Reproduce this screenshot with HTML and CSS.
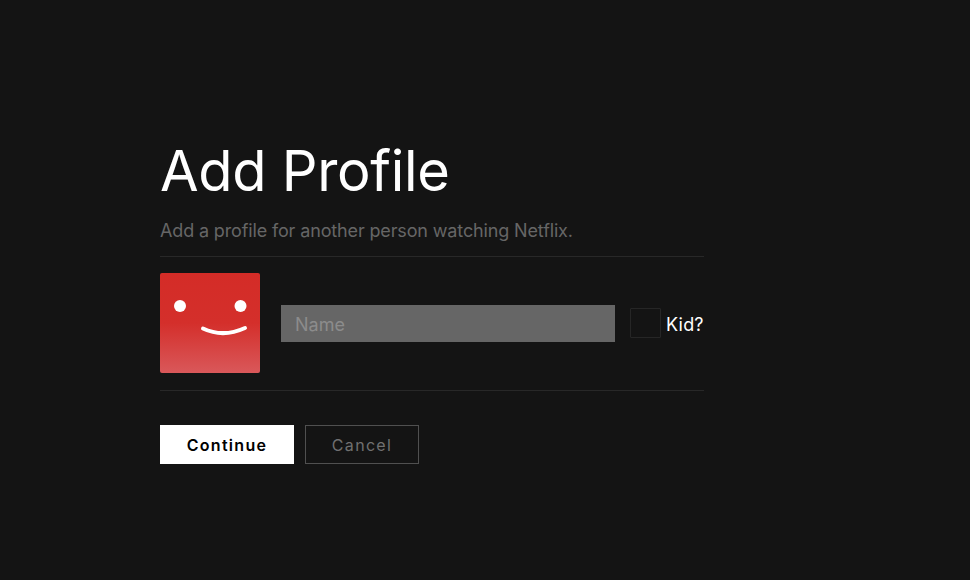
FILE: index.html
```html
<!DOCTYPE html>
<html lang="en">
<head>
<meta charset="utf-8">
<title>Add Profile</title>
<link rel="stylesheet" href="styles.css">
</head>
<body>
<main class="panel">
  <h1 class="title">Add Profile</h1>
  <p class="subtitle">Add a profile for another person watching Netflix.</p>
  <div class="entry">
    <svg class="avatar" viewBox="0 0 100 100" role="img" aria-label="Profile avatar">
      <defs>
        <linearGradient id="face" x1="0" y1="0" x2="0" y2="1">
          <stop offset="0" stop-color="#d42c27"/>
          <stop offset="0.5" stop-color="#d42f2b"/>
          <stop offset="1" stop-color="#d9585a"/>
        </linearGradient>
      </defs>
      <rect width="100" height="100" rx="2" fill="url(#face)"/>
      <circle cx="20" cy="33" r="6" fill="#fff"/>
      <circle cx="80.500" cy="33" r="6" fill="#fff"/>
      <path d="M43 55.500 Q63 65 85 55" fill="none" stroke="#fff" stroke-width="4" stroke-linecap="round"/>
    </svg>
    <input class="name" type="text" placeholder="Name">
    <label class="kid"><span class="box"></span><span class="kid-text">Kid?</span></label>
  </div>
  <div class="actions">
    <button class="btn primary" type="button">Continue</button>
    <button class="btn ghost" type="button">Cancel</button>
  </div>
</main>
</body>
</html>
```
FILE: styles.css
```css
* { box-sizing: border-box; }
html, body { margin: 0; height: 100%; }
body {
  background: #141414;
  font-family: Inter, "Liberation Sans", sans-serif;
  color: #fff;
  overflow: hidden;
}
.panel {
  width: 544px;
  margin-left: 160px;
  padding-top: 137px;
}
.title {
  margin: 0;
  font-size: 56px;
  font-weight: 400;
  line-height: 68px;
  letter-spacing: -0.3px;
}
.subtitle {
  margin: 0;
  padding: 15px 0 14px;
  color: #666;
  font-size: 18px;
  line-height: 22px;
  letter-spacing: -0.14px;
  border-bottom: 1px solid #282828;
}
.entry {
  display: flex;
  align-items: center;
  padding: 16px 0 17px;
  border-bottom: 1px solid #282828;
}
.avatar {
  width: 100px;
  height: 100px;
  flex: none;
}
.name {
  width: 334px;
  height: 37px;
  margin-left: 21px;
  padding: 2px 14px 0;
  border: 0;
  border-radius: 0;
  background: #666;
  color: #fff;
  font: 18px Inter, "Liberation Sans", sans-serif;
}
.name::placeholder { color: #8c8c8c; opacity: 1; }
.kid {
  display: flex;
  align-items: center;
  margin-left: 15px;
  font-size: 18px;
  line-height: 22px;
}
.kid-text {
  padding-top: 4px;
  letter-spacing: 0.2px;
}
.box {
  width: 31px;
  height: 30px;
  margin-right: 5px;
  border: 1px solid #262626;
  border-radius: 1px;
}
.actions {
  display: flex;
  gap: 11px;
  margin-top: 34px;
}
.btn {
  height: 39px;
  border-radius: 0;
  font: 16px Inter, "Liberation Sans", sans-serif;
  letter-spacing: 1.3px;
  padding: 0;
}
.primary {
  width: 134px;
  border: 0;
  background: #fff;
  color: #000;
  font-weight: 600;
}
.ghost {
  width: 114px;
  border: 1px solid #505050;
  background: transparent;
  color: #707070;
}
```
